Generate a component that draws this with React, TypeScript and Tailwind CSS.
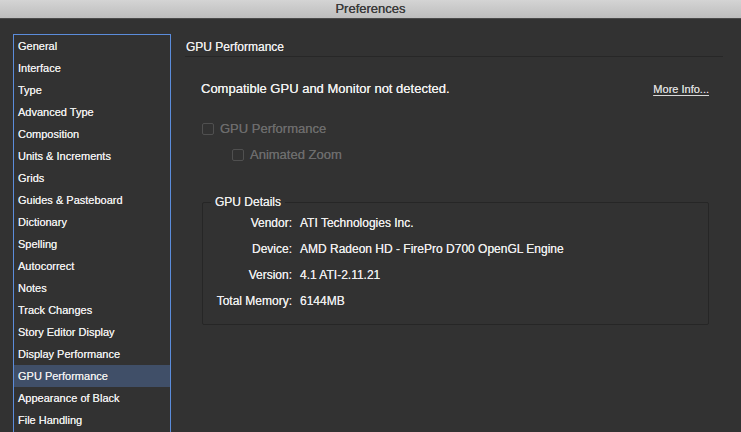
import React from "react";

const items = [
  "General",
  "Interface",
  "Type",
  "Advanced Type",
  "Composition",
  "Units & Increments",
  "Grids",
  "Guides & Pasteboard",
  "Dictionary",
  "Spelling",
  "Autocorrect",
  "Notes",
  "Track Changes",
  "Story Editor Display",
  "Display Performance",
  "GPU Performance",
  "Appearance of Black",
  "File Handling",
];

const details: [string, string][] = [
  ["Vendor:", "ATI Technologies Inc."],
  ["Device:", "AMD Radeon HD - FirePro D700 OpenGL Engine"],
  ["Version:", "4.1 ATI-2.11.21"],
  ["Total Memory:", "6144MB"],
];

export default function App() {
  return (
    <div
      className="w-[741px] h-[432px] overflow-hidden bg-[#323232] flex flex-col [text-shadow:0_0_0.4px_currentColor]"
      style={{ fontFamily: '"Liberation Sans", Arial, sans-serif' }}
    >
      <div className="h-[19px] shrink-0 bg-gradient-to-b from-[#d4d4d4] to-[#bdbdbd] border-b border-[#4a4a4a] flex items-center justify-center text-[13px] text-[#3a3a3a]">
        Preferences
      </div>
      <div className="flex flex-1 min-h-0 pl-[13px] pt-[14px]">
        <div className="mt-[1px] w-[158px] shrink-0 border-t border-l border-r border-[#5b8cdb] flex flex-col">
          {items.map((it) => (
            <div
              key={it}
              className={
                "h-[22px] shrink-0 flex items-center pl-[4px] pt-[1px] text-[11px] whitespace-nowrap text-[#ececec] " +
                (it === "GPU Performance" ? "bg-[#404f68]" : "")
              }
            >
              {it}
            </div>
          ))}
        </div>
        <div className="flex-1 pl-[14px] pr-[18px]">
          <div className="mt-[3px] h-[21px] flex items-center pl-[1px] pt-[1px] text-[12px] text-[#ececec] border-b border-[#272727]">
            GPU Performance
          </div>
          <div className="pl-[16px] pr-[14px]">
            <div className="mt-[23px] h-[18px] flex items-center justify-between">
              <span className="text-[13px] text-[#f0f0f0]">
                Compatible GPU and Monitor not detected.
              </span>
              <span className="text-[11px] text-[#d8d8d8] underline underline-offset-2">
                More Info...
              </span>
            </div>
            <div className="mt-[21px] h-[20px] flex items-center gap-[6px] pl-[1px]">
              <span className="w-[12px] h-[12px] border border-[#505050] rounded-[2px]" />
              <span className="text-[13px] text-[#6c6c6c]">GPU Performance</span>
            </div>
            <div className="mt-[6px] h-[20px] flex items-center gap-[6px] pl-[31px]">
              <span className="w-[12px] h-[12px] border border-[#505050] rounded-[2px]" />
              <span className="text-[13px] text-[#6c6c6c]">Animated Zoom</span>
            </div>
            <fieldset className="mt-[29px] ml-[1px] w-[507px] border border-[#262626] rounded-[2px] px-[8px] pb-[10px]">
              <legend className="px-[4px] text-[12px] text-[#ececec] leading-[16px]">
                GPU Details
              </legend>
              {details.map(([k, v]) => (
                <div key={k} className="h-[26px] flex items-center text-[12px] whitespace-nowrap text-[#ececec]">
                  <span className="w-[81px] text-right">{k}</span>
                  <span className="ml-[8px]">{v}</span>
                </div>
              ))}
            </fieldset>
          </div>
        </div>
      </div>
    </div>
  );
}
